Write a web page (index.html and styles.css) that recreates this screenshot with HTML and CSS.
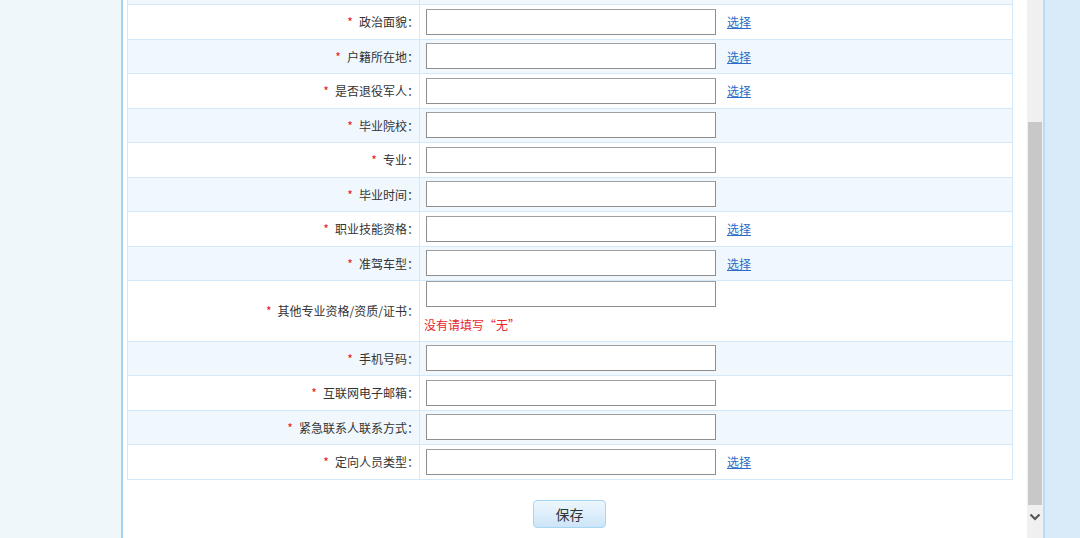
FILE: index.html
```html
<!DOCTYPE html>
<html lang="zh-CN">
<head>
<meta charset="utf-8">
<title>信息填写</title>
<link rel="stylesheet" href="styles.css">
</head>
<body>
<div class="page">
  <div class="side"></div>
  <div class="panel">
    <div class="content">
      <table class="form">
        <tr class="partial alt"><td class="lbl"></td><td class="val"></td></tr>
        <tr><td class="lbl"><span class="req">*</span>政治面貌<span class="colon">：</span></td><td class="val"><input class="txt" type="text"><a class="pick" href="#">选择</a></td></tr>
        <tr class="alt"><td class="lbl"><span class="req">*</span>户籍所在地<span class="colon">：</span></td><td class="val"><input class="txt" type="text"><a class="pick" href="#">选择</a></td></tr>
        <tr><td class="lbl"><span class="req">*</span>是否退役军人<span class="colon">：</span></td><td class="val"><input class="txt" type="text"><a class="pick" href="#">选择</a></td></tr>
        <tr class="alt"><td class="lbl"><span class="req">*</span>毕业院校<span class="colon">：</span></td><td class="val"><input class="txt" type="text"></td></tr>
        <tr><td class="lbl"><span class="req">*</span>专业<span class="colon">：</span></td><td class="val"><input class="txt" type="text"></td></tr>
        <tr class="alt"><td class="lbl"><span class="req">*</span>毕业时间<span class="colon">：</span></td><td class="val"><input class="txt" type="text"></td></tr>
        <tr><td class="lbl"><span class="req">*</span>职业技能资格<span class="colon">：</span></td><td class="val"><input class="txt" type="text"><a class="pick" href="#">选择</a></td></tr>
        <tr class="alt"><td class="lbl"><span class="req">*</span>准驾车型<span class="colon">：</span></td><td class="val"><input class="txt" type="text"><a class="pick" href="#">选择</a></td></tr>
        <tr class="tall"><td class="lbl"><span class="req">*</span>其他专业资格/资质/证书<span class="colon">：</span></td><td class="val top"><input class="txt block" type="text"><div class="note">没有请填写“无”</div></td></tr>
        <tr class="alt"><td class="lbl"><span class="req">*</span>手机号码<span class="colon">：</span></td><td class="val"><input class="txt" type="text"></td></tr>
        <tr><td class="lbl"><span class="req">*</span>互联网电子邮箱<span class="colon">：</span></td><td class="val"><input class="txt" type="text"></td></tr>
        <tr class="alt"><td class="lbl"><span class="req">*</span>紧急联系人联系方式<span class="colon">：</span></td><td class="val"><input class="txt" type="text"></td></tr>
        <tr><td class="lbl"><span class="req">*</span>定向人员类型<span class="colon">：</span></td><td class="val"><input class="txt" type="text"><a class="pick" href="#">选择</a></td></tr>
      </table>
      <div class="actions"><button class="save" type="button">保存</button></div>
    </div>
    <div class="scrollbar">
      <div class="track"><div class="thumb"></div></div>
      <div class="arrow"><svg width="12" height="8" viewBox="0 0 12 8"><path d="M1.5 1.5 L6 6 L10.5 1.5" fill="none" stroke="#555" stroke-width="2.2"/></svg></div>
    </div>
  </div>
  <div class="outer"></div>
</div>
</body>
</html>
```

FILE: styles.css
```css
html, body {
  margin: 0;
  padding: 0;
  height: 538px;
  overflow: hidden;
}
body {
  font-family: "Noto Sans CJK SC", "Liberation Sans", sans-serif;
  font-size: 12px;
  color: #333;
}
.page {
  display: flex;
  height: 538px;
}
.side {
  width: 121px;
  background: #eff7fb;
}
.panel {
  display: flex;
  border-left: 2px solid #a3d4f1;
  background: #fff;
}
.content {
  width: 904px;
}
.form {
  margin-left: 4px;
  width: 886px;
  border-collapse: collapse;
  table-layout: fixed;
  border: 1px solid #cde4f6;
  border-top: none;
}
.form td {
  border: 1px solid #d3e8f8;
  padding: 0;
  height: 33.5px;
}
.form tr.partial td {
  height: 4px;
  border-top: none;
}
.form tr.tall td {
  height: 59.5px;
}
.form tr.alt td {
  background: #f0f8fe;
}
.lbl {
  width: 291px;
  text-align: right;
  white-space: nowrap;
  vertical-align: middle;
}
.colon {
  font-family: "Noto Sans CJK TC", sans-serif;
}
.req {
  color: #e8141c;
  margin-right: 6px;
}
.val {
  padding-left: 4px !important;
  vertical-align: middle;
}
.val.top {
  vertical-align: top;
}
.txt {
  box-sizing: border-box;
  width: 290px;
  height: 26px;
  margin: 0 0 0 2px;
  border: 1px solid #8e8e8e;
  border-top-color: #9f9f9f;
  background: #fff;
  vertical-align: middle;
  padding: 0 3px;
  font: inherit;
}
.txt.block {
  display: block;
  margin-top: 0;
}
.pick {
  margin-left: 11px;
  color: #2a6cc6;
  text-decoration: underline;
  vertical-align: middle;
}
.note {
  color: #e8262d;
  margin-top: 9px;
  line-height: 17px;
}
.actions {
  width: 886px;
  margin-left: 4px;
  margin-top: 20px;
  text-align: center;
}
.save {
  width: 73px;
  height: 28px;
  border: 1px solid #a8d5f2;
  border-radius: 4px;
  background: linear-gradient(#eef7fe, #cde5f8);
  font-family: "Noto Sans CJK SC", sans-serif;
  font-size: 14px;
  color: #333;
  padding: 0;
  margin-right: 1px;
}
.scrollbar {
  width: 16px;
  display: flex;
  flex-direction: column;
  background: #f0f0f0;
}
.track {
  height: 505px;
  padding-top: 122px;
  box-sizing: border-box;
}
.thumb {
  height: 383px;
  margin: 0 1px;
  background: #c8c8c8;
}
.arrow {
  height: 24px;
  display: flex;
  justify-content: center;
  align-items: center;
}
.outer {
  flex: 1;
  border-left: 2px solid #b8ddf4;
  background: #d9ebf9;
}
```
